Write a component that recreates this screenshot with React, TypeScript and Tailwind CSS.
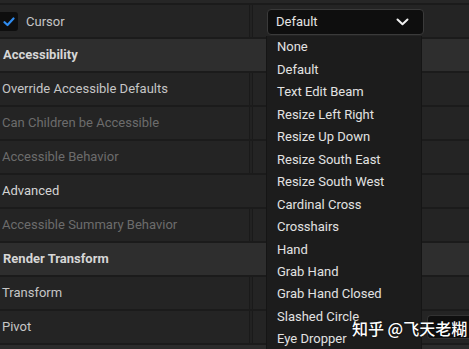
import React from "react";

type Row = {
  label: string;
  kind: "prop" | "header" | "sub" | "muted";
};

const rows: Row[] = [
  { label: "Accessibility", kind: "header" },
  { label: "Override Accessible Defaults", kind: "prop" },
  { label: "Can Children be Accessible", kind: "muted" },
  { label: "Accessible Behavior", kind: "muted" },
  { label: "Advanced", kind: "sub" },
  { label: "Accessible Summary Behavior", kind: "muted" },
  { label: "Render Transform", kind: "header" },
  { label: "Transform", kind: "prop" },
  { label: "Pivot", kind: "prop" },
];

const options = [
  "None",
  "Default",
  "Text Edit Beam",
  "Resize Left Right",
  "Resize Up Down",
  "Resize South East",
  "Resize South West",
  "Cardinal Cross",
  "Crosshairs",
  "Hand",
  "Grab Hand",
  "Grab Hand Closed",
  "Slashed Circle",
  "Eye Dropper",
];

const Splitter = () => (
  <div className="w-[4px] h-full border-x border-[#1a1a1a] bg-[#222222]" />
);

const PropRow = ({ row }: { row: Row }) => {
  if (row.kind === "header") {
    return (
      <div className="h-[34px] flex items-center pl-[3px] bg-[#2e2e2e] border-b-2 border-[#1b1b1b] text-[13px] font-bold text-[#d6d6d6]">
        {row.label}
      </div>
    );
  }
  if (row.kind === "sub") {
    return (
      <div className="h-[34px] flex items-center pl-[2px] bg-[#242424] border-b-2 border-[#1b1b1b] text-[13px] text-[#d4d4d4]">
        {row.label}
      </div>
    );
  }
  return (
    <div className="h-[34px] flex bg-[#242424] border-b-2 border-[#1b1b1b]">
      <div
        className={`w-[249px] flex items-center pl-[2px] text-[13px] ${
          row.kind === "muted" ? "text-[#6c6c6c]" : "text-[#c6c6c6]"
        }`}
      >
        {row.label}
      </div>
      <Splitter />
      <div className="flex-1 flex items-center justify-end">
        {row.label === "Pivot" && (
          <div className="w-[42px] h-[24px] rounded-l-[4px] bg-[#0f0f0f] border border-[#333333] border-r-0" />
        )}
      </div>
    </div>
  );
};

export default function App() {
  return (
    <div
      className="relative w-[469px] h-[349px] overflow-hidden bg-[#242424]"
      style={{ fontFamily: "Roboto, 'Liberation Sans', sans-serif" }}
    >
      {/* tail of the row above */}
      <div className="h-[5px] border-b-2 border-[#1b1b1b] bg-[#262626]" />

      {/* Cursor row with combo box */}
      <div className="h-[34px] flex bg-[#242424] border-b-2 border-[#1b1b1b]">
        <div className="w-[249px] flex items-center gap-[8px] pt-[1px]">
          <div className="w-[18px] h-[19px] rounded-r-[3px] bg-[#0e0e0e] flex items-center justify-center">
            <svg width="12" height="10" viewBox="0 0 12 10">
              <path
                d="M1.5 5.2 L4.5 8 L10.5 1.5"
                fill="none"
                stroke="#2f8cf0"
                strokeWidth="2.2"
                strokeLinecap="round"
                strokeLinejoin="round"
              />
            </svg>
          </div>
          <span className="text-[13px] text-[#c6c6c6]">Cursor</span>
        </div>
        <Splitter />
        <div className="flex-1 flex items-center pl-[14px] pr-[45px]">
          <div className="w-full h-[26px] mt-[2px] flex items-center justify-between pl-[8px] pr-[14px] rounded-[4px] bg-[#0e0e0e] border border-[#3a3a3a] text-[13px] text-[#e4e4e4]">
            <span>Default</span>
            <svg width="13" height="8" viewBox="0 0 13 8">
              <path
                d="M1.5 1.5 L6.5 6.3 L11.5 1.5"
                fill="none"
                stroke="#f0f0f0"
                strokeWidth="2"
                strokeLinecap="round"
                strokeLinejoin="round"
              />
            </svg>
          </div>
        </div>
      </div>

      {rows.map((row) => (
        <PropRow key={row.label} row={row} />
      ))}
      <div className="h-[10px] bg-[#2b2b2b]" />

      {/* open dropdown menu */}
      <div className="absolute left-[266px] top-[36px] w-[156px] h-[330px] bg-[#1c1c1c] border-x border-[#151515]">
        {options.map((o) => (
          <div
            key={o}
            className="h-[22.46px] flex items-center pl-[10px] text-[13px] text-[#e2e2e2]"
          >
            {o}
          </div>
        ))}
      </div>

      {/* watermark */}
      <div
        className="absolute left-[352px] top-[316px] text-[16px] font-medium text-white whitespace-nowrap [text-shadow:0_0_2px_rgba(0,0,0,0.8)]"
        style={{ fontFamily: "'Noto Sans CJK SC', sans-serif" }}
      >
        知乎 @飞天老糊
      </div>
    </div>
  );
}
